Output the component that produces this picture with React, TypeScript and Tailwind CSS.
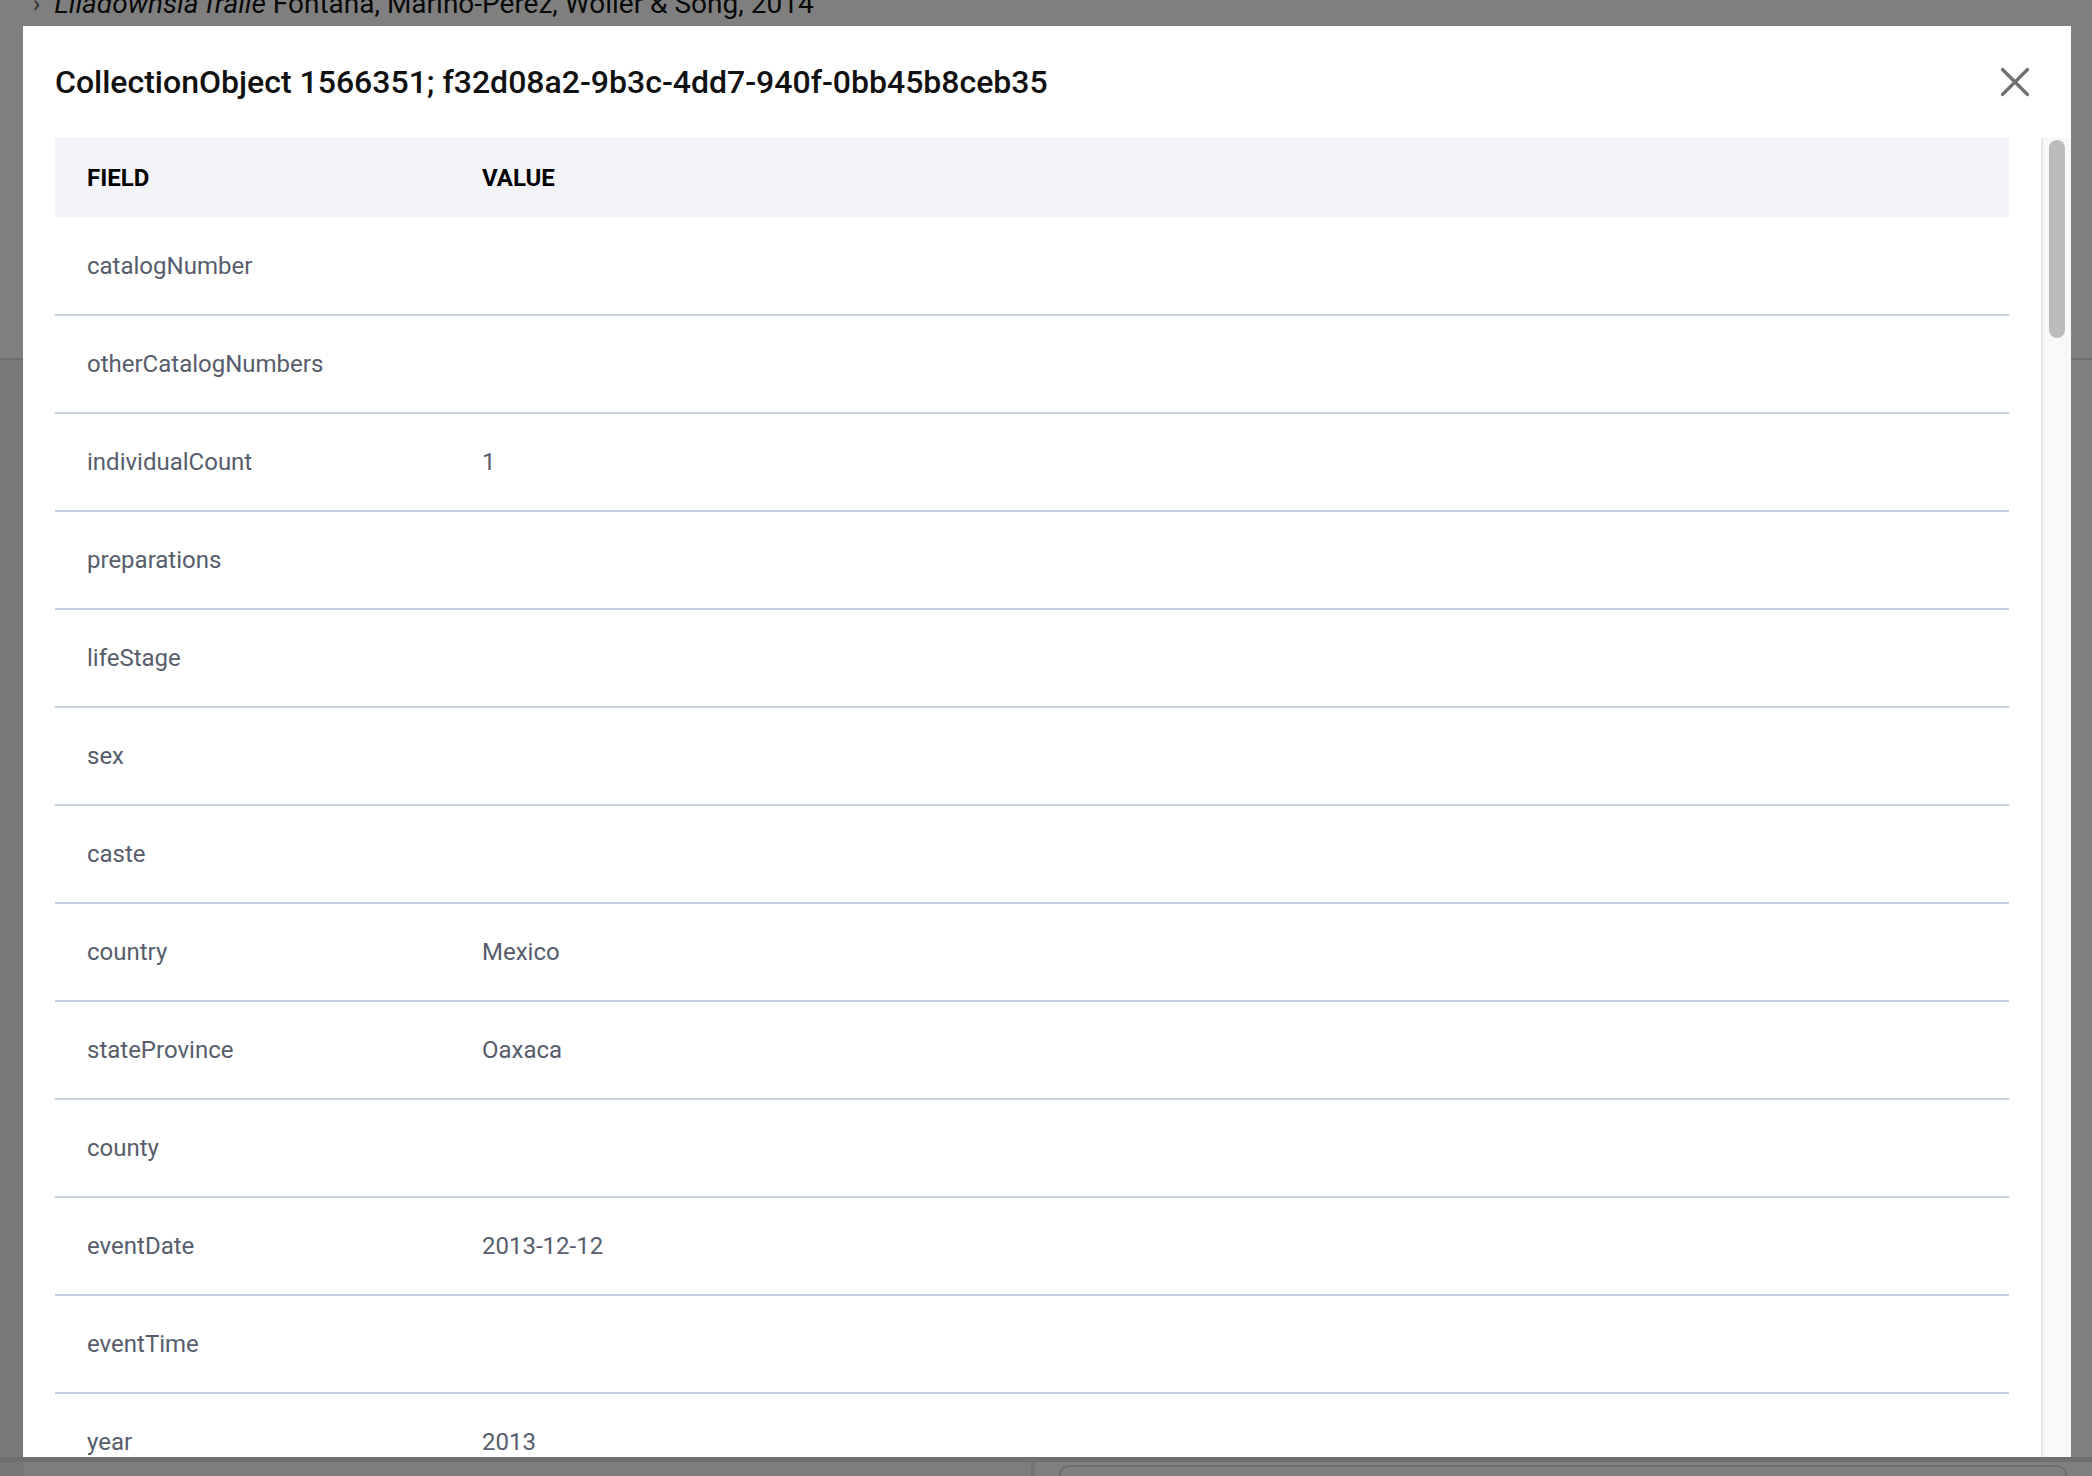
import React from 'react';

interface FieldRow {
  field: string;
  value?: string;
}

const rows: FieldRow[] = [
  { field: 'catalogNumber' },
  { field: 'otherCatalogNumbers' },
  { field: 'individualCount', value: '1' },
  { field: 'preparations' },
  { field: 'lifeStage' },
  { field: 'sex' },
  { field: 'caste' },
  { field: 'country', value: 'Mexico' },
  { field: 'stateProvince', value: 'Oaxaca' },
  { field: 'county' },
  { field: 'eventDate', value: '2013-12-12' },
  { field: 'eventTime' },
  { field: 'year', value: '2013' },
  { field: 'month', value: '12' },
  { field: 'day', value: '12' },
];

const CloseIcon: React.FC = () => (
  <svg width="30" height="30" viewBox="0 0 30 30" fill="none">
    <path d="M2.5 2.5 L27.5 27.5 M27.5 2.5 L2.5 27.5" stroke="#707070" strokeWidth="3.2" strokeLinecap="round" />
  </svg>
);

export default function App() {
  return (
    <div className="relative w-[2092px] h-[1476px] overflow-hidden bg-white font-['Roboto','Liberation_Sans',sans-serif]">
      {/* page behind the dialog */}
      <div className="flex flex-col h-full">
        <div className="h-[360px] shrink-0 border-b-2 border-[#dcdcdc]">
          <div className="-mt-[13px] flex items-center gap-[14px] pl-[33px] text-[28px] leading-[34px] text-[#111]">
            <span className="text-[#555] text-[24px]">›</span>
            <span>
              <i>Liladownsia fraile</i> Fontana, Mariño-Pérez, Woller &amp; Song, 2014
            </span>
          </div>
        </div>
        <div className="flex-1 flex">
          <div className="w-[23px] bg-[#f2f4f8]" />
          <div className="flex-1" />
        </div>
        <div className="h-[19px] shrink-0 flex flex-col">
          <div className="h-[5px] bg-[#dedede]" />
          <div className="flex-1 flex">
            <div className="w-[23px] bg-[#eceef2] border-r border-[#dedede]" />
            <div className="w-[1012px] bg-[#fbfbfb] border-r-4 border-[#e6e6e6]" />
            <div className="w-[24px]" />
            <div className="w-[1008px] mt-[3px] rounded-t-[10px] border-2 border-b-0 border-[#dcdcdc] bg-white" />
          </div>
        </div>
      </div>

      {/* overlay */}
      <div className="absolute inset-0 bg-black/50" />

      {/* dialog */}
      <div className="absolute left-[23px] top-[26px] w-[2048px] h-[1431px] bg-white flex flex-col">
        <div className="h-[112px] shrink-0 flex items-center justify-between pl-[32px] pr-[41px]">
          <h2 className="text-[32px] font-medium text-[#111]">
            CollectionObject 1566351; f32d08a2-9b3c-4dd7-940f-0bb45b8ceb35
          </h2>
          <button className="w-[30px] h-[30px] flex items-center justify-center">
            <CloseIcon />
          </button>
        </div>

        <div className="flex-1 min-h-0 flex">
          <div className="flex-1 overflow-hidden pl-[32px] pr-[32px]">
            <table className="w-full border-collapse">
              <thead>
                <tr className="h-[79px] bg-[#f3f4f8]">
                  <th className="w-[427px] pl-[32px] text-left text-[24px] font-bold text-black">FIELD</th>
                  <th className="text-left text-[24px] font-bold text-black">VALUE</th>
                </tr>
              </thead>
              <tbody>
                {rows.map((row) => (
                  <tr key={row.field} className="h-[98px] border-b-2 border-[#c6d0dc]">
                    <td className="pl-[32px] text-[24px] text-[#575d6c]">{row.field}</td>
                    <td className="text-[24px] text-[#575d6c]">{row.value ?? ''}</td>
                  </tr>
                ))}
              </tbody>
            </table>
          </div>
          {/* scrollbar */}
          <div className="w-[30px] shrink-0 bg-[#f8f8f8] border-l-2 border-[#e6e6e6] pt-[2px] pl-[6px]">
            <div className="w-[16px] h-[198px] rounded-full bg-[#bcbcbc]" />
          </div>
        </div>
      </div>
    </div>
  );
}
